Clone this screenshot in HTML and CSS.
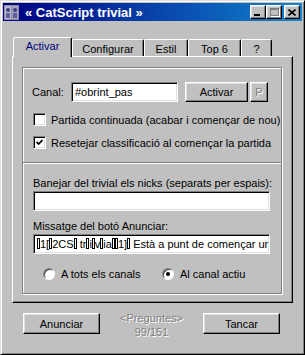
FILE: index.html
```html
<!DOCTYPE html>
<html lang="ca">
<head>
    <meta charset="UTF-8">
    <title>CatScript trivial</title>
    <link rel="stylesheet" href="styles.css">
</head>
<body>

<div class="window">
    <div class="titlebar">
        <svg class="app-icon" width="15" height="15" viewBox="0 0 15 15">
            <rect x="0" y="0" width="15" height="15" fill="#8c8ca8"/>
            <rect x="1" y="1" width="6" height="13" fill="#b8b8d0"/>
            <rect x="8" y="1" width="6" height="13" fill="#a0a0bc"/>
            <circle cx="4" cy="5" r="2" fill="#404080"/>
            <circle cx="11" cy="5" r="2" fill="#404080"/>
            <rect x="2" y="8" width="4" height="5" fill="#6060a0"/>
            <rect x="9" y="8" width="4" height="5" fill="#6060a0"/>
        </svg>
        <span class="title">« CatScript trivial »</span>
        <div class="title-buttons">
            <span class="tbtn"><span class="glyph-min"></span></span>
            <span class="tbtn"><span class="glyph-max"></span></span>
            <span class="tbtn close">
                <svg width="8" height="7" viewBox="0 0 8 7"><path d="M0.5 0.5 L7.5 6.5 M7.5 0.5 L0.5 6.5" stroke="#000" stroke-width="1.6"/></svg>
            </span>
        </div>
    </div>

    <div class="client">
        <div class="tabs">
            <div class="tab active">Activar</div>
            <div class="tab tab-config">Configurar</div>
            <div class="tab tab-estil">Estil</div>
            <div class="tab tab-top">Top 6</div>
            <div class="tab tab-help">?</div>
        </div>

        <div class="panel">
            <div class="group">
                <div class="group-top">
                    <div class="canal-row">
                        <span class="canal-label">Canal:</span>
                        <div class="field canal-field">#obrint_pas</div>
                        <div class="btn btn-activar">Activar</div>
                        <div class="btn btn-p disabled">P</div>
                    </div>
                    <div class="check-row">
                        <span class="checkbox"></span>
                        <span>Partida continuada (acabar i començar de nou)</span>
                    </div>
                    <div class="check-row second">
                        <span class="checkbox">
                            <svg width="7" height="7" viewBox="0 0 7 7"><path d="M0.5 2.8 L2.6 5 L6.5 1" fill="none" stroke="#000" stroke-width="1.7"/></svg>
                        </span>
                        <span>Resetejar classificació al començar la partida</span>
                    </div>
                </div>

                <div class="group-bottom">
                    <div class="field-label">Banejar del trivial els nicks (separats per espais):</div>
                    <div class="field wide-field"></div>
                    <div class="field-label second">Missatge del botó Anunciar:</div>
                    <div class="field wide-field message"><span class="cc"></span>1[<span class="cc"></span>2CS<span class="cc"></span> tr<span class="cc"></span>i<span class="cc"></span>v<span class="cc"></span>ia<span class="cc"></span><span class="cc"></span>1]<span class="cc"></span> Està a punt de començar ur</div>
                    <div class="radio-row">
                        <div class="radio-item first"><span class="radio"></span>A tots els canals</div>
                        <div class="radio-item"><span class="radio checked"></span>Al canal actiu</div>
                    </div>
                </div>
            </div>
        </div>

        <div class="footer">
            <div class="btn btn-footer">Anunciar</div>
            <div class="counter">
                <div>&lt;Preguntes&gt;</div>
                <div>99/151</div>
            </div>
            <div class="btn btn-footer">Tancar</div>
        </div>
    </div>
</div>

</body>
</html>
```

FILE: styles.css
```css
body {
    margin: 0;
    font-family: 'Liberation Sans', Arial, sans-serif;
    font-size: 11px;
    color: #000;
    background: #c0c0c0;
}

.window {
    width: 305px;
    height: 355px;
    box-sizing: border-box;
    background: #c0c0c0;
    border: 1px solid;
    border-color: #dfdfdf #000 #000 #dfdfdf;
    box-shadow: inset 1px 1px #fff, inset -1px -1px #808080;
    padding: 2px;
}

/* title bar */
.titlebar {
    height: 18px;
    display: flex;
    align-items: center;
    background: linear-gradient(to right, #000080, #1084d0);
    padding: 0 2px 0 1px;
}

.app-icon {
    flex: none;
}

.title {
    color: #fff;
    font-weight: bold;
    font-size: 13px;
    margin-left: 6px;
    flex: 1;
}

.title-buttons {
    display: flex;
}

.tbtn {
    width: 16px;
    height: 14px;
    box-sizing: border-box;
    background: #c0c0c0;
    border: 1px solid;
    border-color: #fff #000 #000 #fff;
    box-shadow: inset -1px -1px #808080, inset 1px 1px #dfdfdf;
    display: flex;
    align-items: center;
    justify-content: center;
}

.tbtn.close {
    margin-left: 2px;
}

.glyph-min {
    width: 6px;
    height: 2px;
    background: #000;
    margin-top: 6px;
    margin-left: -2px;
}

.glyph-max {
    width: 9px;
    height: 8px;
    box-sizing: border-box;
    border: 1px solid #808080;
    border-top-width: 2px;
    box-shadow: 1px 1px #fff;
}

/* tabs */
.client {
    padding: 16px 9px 0 9px;
}

.tabs {
    display: flex;
    align-items: flex-end;
    height: 19px;
    padding-left: 1px;
}

.tab {
    height: 17px;
    box-sizing: border-box;
    border: 1px solid;
    border-bottom: none;
    border-color: #fff #000 transparent #fff;
    box-shadow: inset -1px 0 #808080;
    border-radius: 2px 2px 0 0;
    display: flex;
    align-items: center;
    justify-content: center;
    padding-top: 1px;
}

.tab.active {
    width: 59px;
    height: 20px;
    margin-bottom: -1px;
    background: #c0c0c0;
    color: #00007b;
    position: relative;
    z-index: 1;
    padding-top: 0;
    padding-bottom: 3px;
}

.tab-config { width: 72px; }
.tab-estil { width: 44px; }
.tab-top { width: 53px; }
.tab-help { width: 31px; }

.panel {
    height: 247px;
    box-sizing: border-box;
    border: 1px solid;
    border-color: #fff #000 #000 #fff;
    box-shadow: inset -1px -1px #808080;
    padding: 10px 0 0 9px;
}

/* group box */
.group {
    width: 260px;
    height: 227px;
    box-sizing: border-box;
    border: 1px solid #808080;
    box-shadow: inset 1px 1px #fff, 1px 1px #fff;
}

.group-top {
    height: 95px;
    box-sizing: border-box;
    padding: 14px 0 0 9px;
    border-bottom: 1px solid #808080;
    box-shadow: 0 1px #fff;
}

.canal-row {
    display: flex;
    align-items: center;
    height: 20px;
}

.canal-label {
    width: 39px;
}

.field {
    height: 20px;
    box-sizing: border-box;
    background: #fff;
    border: 1px solid;
    border-color: #808080 #fff #fff #808080;
    box-shadow: inset 1px 1px #000, inset -1px -1px #dfdfdf;
    padding: 3px 0 0 3px;
    white-space: nowrap;
    overflow: hidden;
}

.canal-field {
    width: 107px;
}

.btn {
    box-sizing: border-box;
    background: #c0c0c0;
    border: 1px solid;
    border-color: #fff #000 #000 #fff;
    box-shadow: inset -1px -1px #808080, inset 1px 1px #dfdfdf;
    display: flex;
    align-items: center;
    justify-content: center;
}

.btn-activar {
    width: 63px;
    height: 20px;
    margin-left: 7px;
}

.btn-p {
    width: 18px;
    height: 20px;
    margin-left: 2px;
}

.disabled,
.counter {
    color: #808080;
    text-shadow: 1px 1px #fff;
}

.check-row {
    display: flex;
    align-items: center;
    height: 13px;
    margin-top: 11px;
    padding-left: 1px;
    white-space: nowrap;
}

.check-row.second {
    margin-top: 10px;
}

.checkbox {
    width: 13px;
    height: 13px;
    box-sizing: border-box;
    background: #fff;
    border: 1px solid;
    border-color: #808080 #fff #fff #808080;
    box-shadow: inset 1px 1px #000, inset -1px -1px #dfdfdf;
    margin-right: 5px;
    display: flex;
    align-items: center;
    justify-content: center;
    flex: none;
}

.group-bottom {
    padding: 13px 0 0 10px;
}

.field-label {
    height: 14px;
    line-height: 14px;
    white-space: nowrap;
}

.field-label.second {
    margin-top: 8px;
}

.wide-field {
    width: 237px;
    margin-top: 1px;
}

.cc {
    display: inline-block;
    width: 1px;
    height: 9px;
    border: 1px solid #000;
    vertical-align: -1px;
}

.radio-row {
    display: flex;
    margin-top: 14px;
}

.radio-item {
    display: flex;
    align-items: center;
    width: 132px;
}

.radio-item.first {
    padding-left: 10px;
}

.radio {
    width: 12px;
    height: 12px;
    box-sizing: border-box;
    border-radius: 50%;
    background: #fff;
    border: 1px solid;
    border-color: #808080 #fff #fff #808080;
    box-shadow: inset 1px 1px #404040;
    margin-right: 6px;
    display: flex;
    align-items: center;
    justify-content: center;
}

.radio.checked::after {
    content: "";
    width: 4px;
    height: 4px;
    border-radius: 50%;
    background: #000;
}

/* footer */
.footer {
    display: flex;
    align-items: flex-start;
    margin-top: 10px;
    padding-left: 11px;
}

.btn-footer {
    width: 77px;
    height: 21px;
}

.counter {
    width: 103px;
    text-align: center;
    line-height: 14px;
    margin-top: -2px;
}
```
